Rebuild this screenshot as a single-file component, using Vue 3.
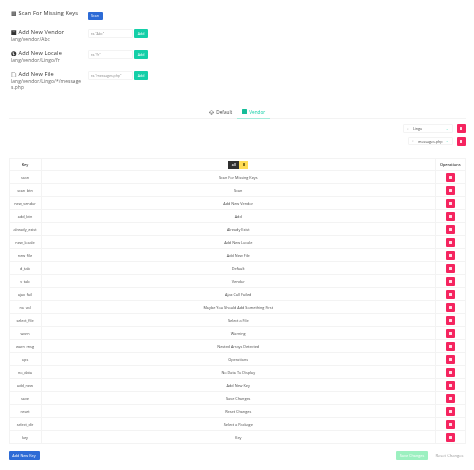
<script setup>
const rows = [
  ['scan', 'Scan For Missing Keys'],
  ['scan_btn', 'Scan'],
  ['new_vendor', 'Add New Vendor'],
  ['add_btn', 'Add'],
  ['already_exist', 'Already Exist'],
  ['new_locale', 'Add New Locale'],
  ['new_file', 'Add New File'],
  ['d_tab', 'Default'],
  ['v_tab', 'Vendor'],
  ['ajax_fail', 'Ajax Call Failed'],
  ['no_val', 'Maybe You Should Add Something First'],
  ['select_file', 'Select a File'],
  ['warn', 'Warning'],
  ['warn_msg', 'Nested Arrays Detected'],
  ['ops', 'Operations'],
  ['no_data', 'No Data To Display'],
  ['add_new', 'Add New Key'],
  ['save', 'Save Changes'],
  ['reset', 'Reset Changes'],
  ['select_dir', 'Select a Package'],
  ['key', 'Key']
]
const forms = [
  { title: 'Add New Vendor', sub: 'lang/vendor/Abc', ph: 'ex."Abc"', icon: 'box' },
  { title: 'Add New Locale', sub: 'lang/vendor/Lingo/fr', ph: 'ex."fr"', icon: 'globe' },
  { title: 'Add New File', sub: 'lang/vendor/Lingo/*/messages.php', ph: 'ex."messages.php"', icon: 'file' }
]
</script>

<template>
  <div class="page">
    <section class="top">
      <div class="line scan-line">
        <div class="label">
          <h3 class="title">
            <svg class="ic" viewBox="0 0 10 10"><path d="M1 1h8v8H1z" fill="#555" /><path d="M2 3h6M2 5h6M2 7h6" stroke="#ccc" stroke-width=".7" /></svg>
            Scan For Missing Keys
          </h3>
        </div>
        <button class="btn blue scan">Scan</button>
      </div>
      <div v-for="f in forms" :key="f.title" class="line">
        <div class="label">
          <h3 class="title">
            <svg v-if="f.icon === 'box'" class="ic" viewBox="0 0 10 10"><path d="M.5 .5h9v9h-9z" fill="#333" /><path d="M3 3h4" stroke="#aaa" /></svg>
            <svg v-else-if="f.icon === 'globe'" class="ic" viewBox="0 0 10 10"><circle cx="5" cy="5" r="4.600" fill="#333" /><path d="M3 2l3 1-1 2 2 2-3 1-1-3z" fill="#ddd" /></svg>
            <svg v-else class="ic" viewBox="0 0 10 10"><path d="M1.500 .5h4.500l2.500 2.500v6.500h-7z" fill="none" stroke="#444" stroke-width=".7" /></svg>
            {{ f.title }}
          </h3>
          <p class="sub">{{ f.sub }}</p>
        </div>
        <div class="adder">
          <input class="input" :placeholder="f.ph" />
          <button class="btn teal add">Add</button>
        </div>
      </div>
    </section>

    <nav class="tabs">
      <a class="tab">
        <svg class="tab-ic" viewBox="0 0 10 10"><path d="M1 4l4-3 4 3v2l-4 3-4-3z" fill="none" stroke="#444" stroke-width=".9" /><path d="M1 4l4 2 4-2M5 6v3" fill="none" stroke="#444" stroke-width=".7" /></svg>
        Default
      </a>
      <a class="tab active">
        <span class="tab-sq"></span>
        Vendor
      </a>
    </nav>

    <div class="selects">
      <div class="sel-row">
        <div class="sel wide"><span class="dot">⌕</span><span class="sel-t">Lingo</span><span class="caret">⌄</span></div>
        <button class="btn red small"><span class="trash"></span></button>
      </div>
      <div class="sel-row">
        <div class="sel narrow"><span class="dot">⌕</span><span class="sel-t">messages.php</span><span class="caret">⌄</span></div>
        <button class="btn red small"><span class="trash"></span></button>
      </div>
    </div>

    <table class="table">
      <thead>
        <tr>
          <th class="k">Key</th>
          <th class="v">
            <div class="locale-tabs">
              <span class="all">all</span>
              <span class="yel"><span class="trash dark"></span></span>
            </div>
          </th>
          <th class="o">Operations</th>
        </tr>
      </thead>
      <tbody>
        <tr v-for="r in rows" :key="r[0]">
          <td class="k">{{ r[0] }}</td>
          <td class="v">{{ r[1] }}</td>
          <td class="o"><button class="btn red small"><span class="trash"></span></button></td>
        </tr>
      </tbody>
    </table>

    <footer class="foot">
      <button class="btn blue addkey">Add New Key</button>
      <div class="foot-r">
        <button class="btn green save">Save Changes</button>
        <button class="btn plain">Reset Changes</button>
      </div>
    </footer>
  </div>
</template>

<style scoped>
.page {
  box-sizing: border-box;
  width: 474px;
  height: 470px;
  padding: 10px 8.500px 0;
  font-family: "Open Sans", "Liberation Sans", sans-serif;
  color: #4a4a4a;
  background: #fff;
  overflow: hidden;
  filter: blur(.35px);
}
.top { padding-left: 2.500px; }
.line {
  display: flex;
  align-items: flex-start;
  height: 21px;
}
.scan-line { height: 10px; margin-bottom: 9px; }
.label { width: 76.500px; flex: none; }
.title {
  margin: 0;
  font-size: 5.600px;
  font-weight: 400;
  line-height: 7px;
  letter-spacing: .13px;
  color: #363636;
  white-space: nowrap;
  display: flex;
  align-items: center;
  gap: 2px;
}
.ic { width: 5.500px; height: 5.500px; flex: none; }
.sub {
  margin: 0;
  font-size: 4.900px;
  line-height: 6px;
  letter-spacing: .08px;
  color: #666;
  word-break: break-all;
  width: 70.500px;
}
.btn {
  border: 0;
  padding: 0;
  margin: 0;
  font-family: inherit;
  color: #fff;
  display: inline-flex;
  align-items: center;
  justify-content: center;
  border-radius: 1px;
}
.blue { background: #2d6bd6; }
.scan { width: 15px; height: 8.500px; margin-top: 1.500px; font-size: 3.600px; }
.adder { display: flex; gap: 1.500px; }
.input {
  box-sizing: border-box;
  width: 45px;
  height: 8.500px;
  border: 1px solid #f3f3f3;
  border-radius: 1px;
  padding: 0 2px;
  font-family: inherit;
  font-size: 3.500px;
  outline: 0;
}
.input::placeholder { color: #8a8a8a; opacity: 1; }
.teal { background: #14cfa8; }
.add { width: 14px; height: 8.500px; font-size: 3.600px; }
.tabs {
  margin-top: 13.500px;
  display: flex;
  justify-content: center;
  height: 12px;
  border-bottom: 1px solid #f3f3f3;
}
.tab {
  box-sizing: border-box;
  height: 13px;
  padding: 0 5px;
  display: flex;
  align-items: center;
  gap: 2.500px;
  font-size: 4.700px;
  color: #4a4a4a;
}
.tab.active { color: #14cfa8; border-bottom: 1px solid #a5ecdc; }
.tab-ic { width: 5px; height: 5px; }
.tab-sq { width: 4.500px; height: 4.500px; background: #14bd98; border-radius: .5px; }
.selects {
  margin-top: 5.500px;
  display: flex;
  flex-direction: column;
  align-items: flex-end;
  gap: 3.500px;
  height: 34px;
}
.sel-row { display: flex; gap: 3.500px; align-items: center; }
.sel {
  box-sizing: border-box;
  height: 8.500px;
  border: 1px solid #f3f3f3;
  border-radius: 1px;
  display: flex;
  align-items: center;
  padding: 0 3px;
  font-size: 3.700px;
  color: #4a4a4a;
}
.wide { width: 50px; }
.narrow { width: 45px; }
.dot { color: #aaa; width: 6px; font-size: 3px; }
.sel-t { flex: 1; }
.caret { color: #14cfa8; font-size: 3px; }
.red { background: #f5245f; }
.small { width: 9px; height: 9px; }
.trash {
  display: block;
  width: 2.500px;
  height: 3px;
  background: #fff;
  opacity: .85;
  border-radius: .3px;
}
.trash.dark { background: #6b5a10; }
.table {
  box-sizing: border-box;
  width: 457px;
  border-collapse: collapse;
  table-layout: fixed;
  font-size: 3.800px;
  color: #4a4a4a;
}
th, td {
  border: 1px solid #f3f3f3;
  padding: 0;
  text-align: center;
  vertical-align: middle;
  height: 12px;
  font-weight: 400;
}
th { height: 11px; font-weight: 600; color: #363636; }
.k { width: 31px; }
.o { width: 28.500px; }
.locale-tabs { display: flex; justify-content: center; }
.all {
  width: 11px;
  height: 8px;
  line-height: 8px;
  background: #2f2f2f;
  color: #fff;
  font-size: 3.500px;
  font-weight: 600;
}
.yel {
  width: 9px;
  height: 8px;
  background: #ffdd57;
  display: flex;
  align-items: center;
  justify-content: center;
}
td.o .btn { display: flex; margin: 0 auto; }
.foot {
  margin-top: 6.500px;
  display: flex;
  justify-content: space-between;
  align-items: center;
}
.addkey { width: 31px; height: 9px; font-size: 3.800px; }
.foot-r { display: flex; gap: 7.500px; padding-right: 2px; align-items: center; }
.green { background: #9cf0c0; }
.save { width: 32px; height: 9px; font-size: 3.800px; }
.plain { background: transparent; color: #9a9a9a; font-size: 4.100px; }
</style>
